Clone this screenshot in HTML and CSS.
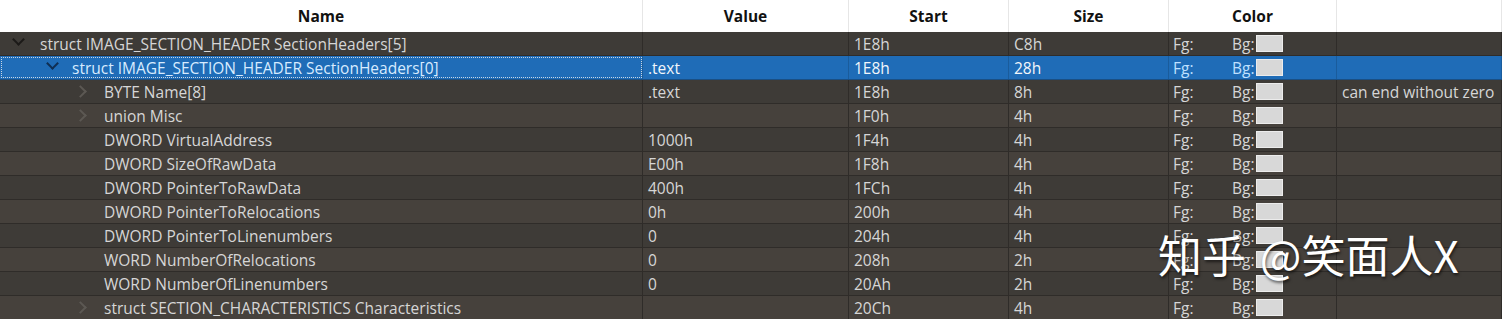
FILE: index.html
```html
<!DOCTYPE html>
<html lang="en">
<head>
  <meta charset="UTF-8">
  <title>SectionHeaders</title>
  <link rel="stylesheet" href="styles.css">
</head>
<body>
  <div class="grid" role="table">
    <div class="row head">
      <div class="cell">Name</div>
      <div class="cell">Value</div>
      <div class="cell">Start</div>
      <div class="cell">Size</div>
      <div class="cell">Color</div>
      <div class="cell"></div>
    </div>

    <div class="row">
      <div class="cell name lvl0"><span class="tw open"></span>struct IMAGE_SECTION_HEADER SectionHeaders[5]</div>
      <div class="cell"></div>
      <div class="cell">1E8h</div>
      <div class="cell">C8h</div>
      <div class="cell color"><span class="fg">Fg:</span><span>Bg:</span><span class="swatch"></span></div>
      <div class="cell"></div>
    </div>
    <div class="row sel">
      <div class="cell name lvl1"><span class="tw open"></span>struct IMAGE_SECTION_HEADER SectionHeaders[0]</div>
      <div class="cell">.text</div>
      <div class="cell">1E8h</div>
      <div class="cell">28h</div>
      <div class="cell color"><span class="fg">Fg:</span><span>Bg:</span><span class="swatch"></span></div>
      <div class="cell"></div>
    </div>
    <div class="row">
      <div class="cell name lvl2"><span class="tw closed"></span>BYTE Name[8]</div>
      <div class="cell">.text</div>
      <div class="cell">1E8h</div>
      <div class="cell">8h</div>
      <div class="cell color"><span class="fg">Fg:</span><span>Bg:</span><span class="swatch"></span></div>
      <div class="cell">can end without zero</div>
    </div>
    <div class="row">
      <div class="cell name lvl2"><span class="tw closed"></span>union Misc</div>
      <div class="cell"></div>
      <div class="cell">1F0h</div>
      <div class="cell">4h</div>
      <div class="cell color"><span class="fg">Fg:</span><span>Bg:</span><span class="swatch"></span></div>
      <div class="cell"></div>
    </div>
    <div class="row">
      <div class="cell name lvl2"><span class="tw"></span>DWORD VirtualAddress</div>
      <div class="cell">1000h</div>
      <div class="cell">1F4h</div>
      <div class="cell">4h</div>
      <div class="cell color"><span class="fg">Fg:</span><span>Bg:</span><span class="swatch"></span></div>
      <div class="cell"></div>
    </div>
    <div class="row">
      <div class="cell name lvl2"><span class="tw"></span>DWORD SizeOfRawData</div>
      <div class="cell">E00h</div>
      <div class="cell">1F8h</div>
      <div class="cell">4h</div>
      <div class="cell color"><span class="fg">Fg:</span><span>Bg:</span><span class="swatch"></span></div>
      <div class="cell"></div>
    </div>
    <div class="row">
      <div class="cell name lvl2"><span class="tw"></span>DWORD PointerToRawData</div>
      <div class="cell">400h</div>
      <div class="cell">1FCh</div>
      <div class="cell">4h</div>
      <div class="cell color"><span class="fg">Fg:</span><span>Bg:</span><span class="swatch"></span></div>
      <div class="cell"></div>
    </div>
    <div class="row">
      <div class="cell name lvl2"><span class="tw"></span>DWORD PointerToRelocations</div>
      <div class="cell">0h</div>
      <div class="cell">200h</div>
      <div class="cell">4h</div>
      <div class="cell color"><span class="fg">Fg:</span><span>Bg:</span><span class="swatch"></span></div>
      <div class="cell"></div>
    </div>
    <div class="row">
      <div class="cell name lvl2"><span class="tw"></span>DWORD PointerToLinenumbers</div>
      <div class="cell">0</div>
      <div class="cell">204h</div>
      <div class="cell">4h</div>
      <div class="cell color"><span class="fg">Fg:</span><span>Bg:</span><span class="swatch"></span></div>
      <div class="cell"></div>
    </div>
    <div class="row">
      <div class="cell name lvl2"><span class="tw"></span>WORD NumberOfRelocations</div>
      <div class="cell">0</div>
      <div class="cell">208h</div>
      <div class="cell">2h</div>
      <div class="cell color"><span class="fg">Fg:</span><span>Bg:</span><span class="swatch"></span></div>
      <div class="cell"></div>
    </div>
    <div class="row">
      <div class="cell name lvl2"><span class="tw"></span>WORD NumberOfLinenumbers</div>
      <div class="cell">0</div>
      <div class="cell">20Ah</div>
      <div class="cell">2h</div>
      <div class="cell color"><span class="fg">Fg:</span><span>Bg:</span><span class="swatch"></span></div>
      <div class="cell"></div>
    </div>
    <div class="row">
      <div class="cell name lvl2"><span class="tw closed"></span>struct SECTION_CHARACTERISTICS Characteristics</div>
      <div class="cell"></div>
      <div class="cell">20Ch</div>
      <div class="cell">4h</div>
      <div class="cell color"><span class="fg">Fg:</span><span>Bg:</span><span class="swatch"></span></div>
      <div class="cell"></div>
    </div>
  </div>

  <div class="watermark">知乎 @笑面人X</div>
</body>
</html>
```

FILE: styles.css
```css
html, body {
  margin: 0;
  background: #3d3a36;
  overflow: hidden;
}

body {
  font-family: "Open Sans", "Noto Sans", sans-serif;
  font-size: 15.5px;
  color: #d6d6d6;
}

.grid {
  width: 1502px;
}

.row {
  display: grid;
  grid-template-columns: 643px 206px 160px 160px 168px 1fr;
  height: 24px;
  box-sizing: border-box;
  border-bottom: 1px solid #2f2c29;
  background: #3e3b37;
}

.row:nth-child(odd) {
  background: #46413c;
}

.cell {
  display: flex;
  align-items: center;
  padding-left: 5px;
  border-right: 1px solid #2f2c29;
  white-space: nowrap;
  overflow: hidden;
}

.row.head {
  height: 32px;
  background: #fff;
  border-bottom: none;
  color: #111;
  font-weight: bold;
  font-size: 15.5px;
}

.row.head .cell {
  justify-content: center;
  padding: 0;
  border-right: 1px solid #e6e6e6;
}

.row.sel {
  background: #1f6cb7;
  color: #f2f6fb;
  border-bottom-color: #1a4f84;
}

.row.sel .cell {
  border-right-color: #1a5c9c;
}

.row.sel .name {
  color: #d7ebff;
  outline: 1px dotted #c9d6e3;
  outline-offset: -2px;
}

.row.sel .color {
  color: #bfe0ff;
}

.name {
  padding-left: 0;
}

.tw {
  display: inline-block;
  width: 32px;
  height: 23px;
  flex: none;
  position: relative;
}

.tw.open::before,
.tw.closed::before {
  content: "";
  position: absolute;
  width: 7px;
  height: 7px;
  border-right: 2.5px solid #1c1a18;
  border-bottom: 2.5px solid #1c1a18;
}

.tw.open::before {
  left: 12px;
  top: 3px;
  transform: rotate(45deg);
}

.tw.closed::before {
  left: 4px;
  top: 7px;
  transform: rotate(-45deg);
  border-color: #5c5853;
}

.row.sel .tw.open::before {
  border-color: #0f2e52;
}

.lvl0 {
  padding-left: 2px;
}

.lvl1 {
  padding-left: 36px;
}

.lvl2 {
  padding-left: 72px;
}

.lvl0 .tw {
  width: 38px;
}

.lvl1 .tw {
  width: 36px;
}

.color {
  padding-left: 4px;
}

.color .fg {
  width: 59px;
}

.swatch {
  display: inline-block;
  width: 27px;
  height: 17px;
  margin-left: 1px;
  box-sizing: border-box;
  background: #d8d8d8;
  border: 1px solid #ececec;
}

.watermark {
  position: absolute;
  left: 1158px;
  top: 222px;
  font-family: "Noto Sans CJK SC", sans-serif;
  font-size: 44px;
  color: #fff;
  text-shadow: 1px 2px 3px rgba(0, 0, 0, 0.6);
  word-spacing: 4px;
}
```
